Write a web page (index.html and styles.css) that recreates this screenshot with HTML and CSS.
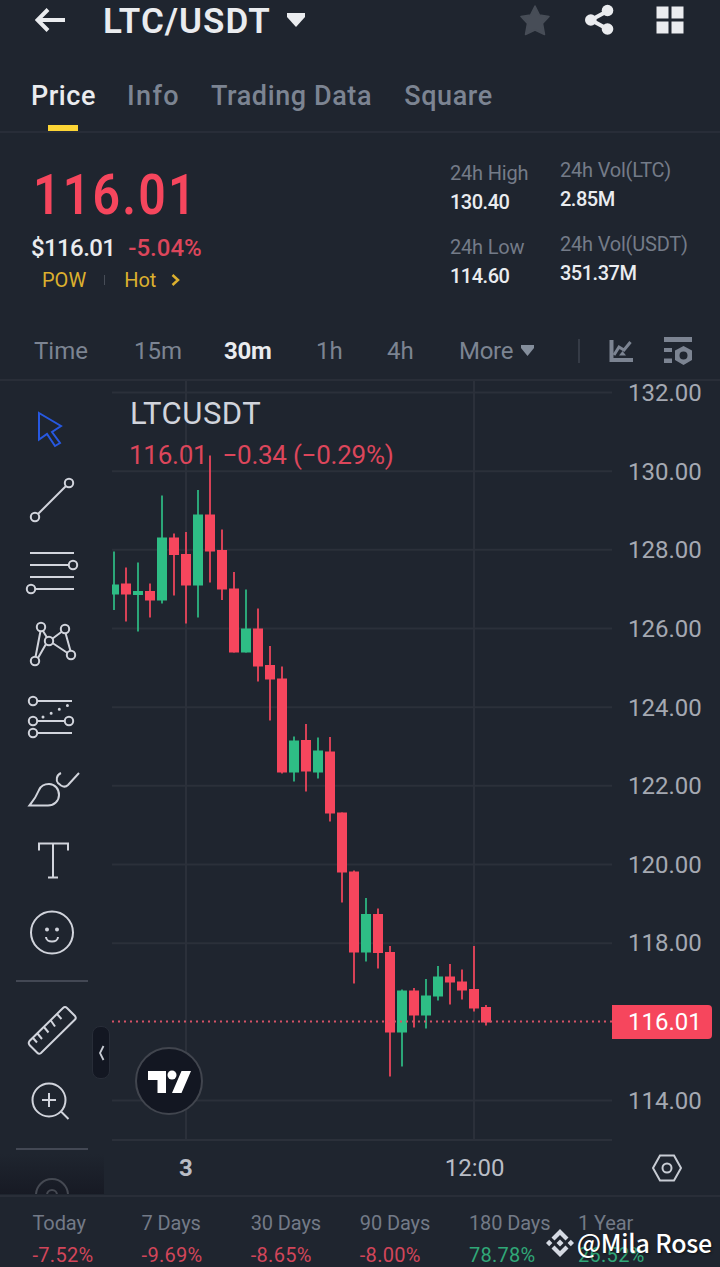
FILE: index.html
```html
<!DOCTYPE html>
<html lang="en">
<head>
    <meta charset="UTF-8">
    <meta name="viewport" content="width=device-width, initial-scale=1.0">
    <title>LTC/USDT</title>
    <link rel="stylesheet" href="styles.css">
</head>
<body>
    <header class="header">
        <svg class="back" width="30" height="24" viewBox="0 0 30 24"><path d="M30 12H3M13 1.500L2.500 12L13 22.500" fill="none" stroke="#eaecef" stroke-width="4"/></svg>
        <h1>LTC/USDT</h1>
        <svg width="18" height="15" viewBox="0 0 18 15"><path d="M0 0H18V4L9 14L0 4Z" fill="#eaecef"/></svg>
        <div class="actions">
            <svg width="30" height="31" viewBox="0 0 30 31"><path d="M15 1L19.500 10L29 11.500L22.500 18.500L24.500 29.500L15 25L5.500 29.500L7.500 18.500L1 11.500L10.500 10Z" fill="#474d57" stroke="#474d57" stroke-width="1.500" stroke-linejoin="round"/></svg>
            <svg width="30" height="32" viewBox="0 0 30 32"><path d="M22.500 7L6 16L22.500 25" fill="none" stroke="#eaecef" stroke-width="4"/><g fill="#eaecef"><circle cx="22.500" cy="6.500" r="5.800"/><circle cx="5.800" cy="16" r="5.800"/><circle cx="22.500" cy="25" r="5.800"/></g></svg>
            <svg width="28" height="28" viewBox="0 0 28 28"><path d="M.5.5h12v12H.5zM15.500.5h12v12h-12zM.5 15.500h12v12H.5zM15.500 15.500h12v12h-12z" fill="#eaecef"/></svg>
        </div>
    </header>

    <nav class="tabs">
        <a class="tab active">Price</a>
        <a class="tab info">Info</a>
        <a class="tab trading">Trading Data</a>
        <a class="tab square">Square</a>
    </nav>

    <section class="ticker">
        <div class="summary">
            <div class="last">116.01</div>
            <div class="fiat"><span class="usd">$116.01</span><span class="change">-5.04%</span></div>
            <div class="tags">
                <span>POW</span><i></i><span class="hot">Hot</span>
                <svg width="9" height="12" viewBox="0 0 9 12"><path d="M1.500 1L7 6L1.500 11" fill="none" stroke="#dcb02e" stroke-width="2.500"/></svg>
            </div>
        </div>
        <dl class="day high">
            <dt>24h High</dt><dd>130.40</dd>
            <dt>24h Low</dt><dd>114.60</dd>
        </dl>
        <dl class="day volume">
            <dt>24h Vol(LTC)</dt><dd>2.85M</dd>
            <dt>24h Vol(USDT)</dt><dd>351.37M</dd>
        </dl>
    </section>

    <nav class="intervals">
        <span class="time">Time</span>
        <span class="m15">15m</span>
        <span class="m30 active">30m</span>
        <span class="h1">1h</span>
        <span class="h4">4h</span>
        <span class="more">More <svg width="13" height="11" viewBox="0 0 13 11"><path d="M0 0H13V3L6.500 11L0 3Z" fill="#848e9c"/></svg></span>
        <i></i>
        <svg class="line-icon" width="24" height="24" viewBox="0 0 24 24"><g fill="none" stroke="#7c8492"><path d="M2.500 1V21H24" stroke-width="4"/><path d="M5 16L10 8L15 11L21.500 3" stroke-width="3"/></g><path d="M10 16.500L13.500 12L17 16.500Z" fill="#7c8492"/></svg>
        <svg width="28" height="28" viewBox="0 0 28 28"><g fill="#7c8492"><path d="M0 0H28V5H0zM0 11H8V15H0zM0 21.500H8V26H0z"/><path fill-rule="evenodd" d="M19.500 9L28 13.500V23L19.500 28L11 23V13.500ZM19.500 14.500A4 4 0 1 0 19.500 22.500A4 4 0 1 0 19.500 14.500Z"/></g></svg>
    </nav>

    <main class="chart">
        <aside class="toolbar">
            <svg class="tool cursor" viewBox="0 0 56 56"><path d="M15 12L37 25L28 31L36 42L31 45L23 33L15 38.500Z"/></svg>
            <svg class="tool" viewBox="0 0 56 56"><path d="M14 41L42 13"/><circle cx="45" cy="10" r="4.200"/><circle cx="11" cy="44" r="4.200"/></svg>
            <svg class="tool" viewBox="0 0 56 56"><path d="M6 8H50M6 20H45M6 32H50M11 44H50"/><circle cx="49" cy="20" r="4.200"/><circle cx="7" cy="44" r="4.200"/></svg>
            <svg class="tool" viewBox="0 0 56 56"><path d="M16.500 14L11.500 40M19 14L23 20.500M22 27L14 41M28 22L38 14.500M41.500 16L46.500 34M28.500 26L43.500 36"/><circle cx="17" cy="10" r="4.200"/><circle cx="41" cy="12" r="4.200"/><circle cx="25" cy="24" r="4.200"/><circle cx="47" cy="38" r="4.200"/><circle cx="11" cy="44" r="4.200"/></svg>
            <svg class="tool" viewBox="0 0 56 56"><path d="M13 12H48M13 32H41M13 44H48"/><circle cx="9" cy="12" r="4.200"/><circle cx="9" cy="32" r="4.200"/><circle cx="45" cy="32" r="4.200"/><circle cx="9" cy="44" r="4.200"/><path class="dots" d="M19 28L44.500 16"/></svg>
            <svg class="tool" viewBox="0 0 56 56"><path d="M5.500 44.500C10 39 13 34 15 29C17 24.500 20 23 25 23C31 23 35 28 35 34C35 40 30 44.500 24 44.500ZM37 12C32 14 32 20 34 22L37 24.500Q41 27 44 24L55 12"/></svg>
            <svg class="tool" viewBox="0 0 56 56"><path d="M15 17.500V10.500H44V17.500M29 10.500V44.500M24 44.500H34"/></svg>
            <svg class="tool" viewBox="0 0 56 56"><circle cx="28" cy="27.500" r="21"/><path d="M22 32C22 38 34 38 34 32"/><circle class="solid" cx="23" cy="24.500" r="2"/><circle class="solid" cx="33" cy="24.500" r="2"/></svg>
            <hr>
            <svg class="tool" viewBox="0 0 56 56"><path d="M39 7Q41 5 43 7L51 15Q52.500 17 51 18.500L17 52Q15 53.500 13.500 52L5.500 44Q4 42 5.500 40ZM33 13L37.500 18M26.500 19L31 25.500M20 26L24.500 31.500M13.500 32.500L18 38M9 37L13 41.500"/></svg>
            <svg class="tool" viewBox="0 0 56 56"><circle cx="25" cy="27" r="16.500"/><path d="M25 20V34M18 27H32M37 38.500L44.500 46"/></svg>
            <hr>
            <div class="fade">
                <svg width="56" height="40" viewBox="0 0 56 40"><g fill="none" stroke="#454952" stroke-width="2"><circle cx="28" cy="41" r="16"/><circle cx="28" cy="41" r="5"/></g></svg>
            </div>
        </aside>

        <div class="plot">
            <svg id="candles" width="500" height="814" viewBox="112 381 500 814"></svg>
            <div class="legend">
                <div class="symbol">LTCUSDT</div>
                <div class="quote"><span>116.01</span><span>−0.34 (−0.29%)</span></div>
            </div>
            <svg class="tv" width="68" height="68" viewBox="0 0 68 68"><circle cx="34" cy="34" r="33" fill="#131722" stroke="#41454e" stroke-width="2"/><path d="M13 24H31V46H22.500V33H13ZM46.500 24H56L46.500 46H37Z" fill="#fff"/><circle cx="37" cy="28" r="4.500" fill="#fff"/></svg>
            <div class="times"><b>3</b><span>12:00</span></div>
            <button class="collapse"><svg width="7" height="16" viewBox="0 0 7 16"><path d="M5.500 1L2 8L5.500 15" fill="none" stroke="#c8ccd4" stroke-width="1.800"/></svg></button>
        </div>

        <div class="axis">
            <span>132.00</span>
            <span>130.00</span>
            <span>128.00</span>
            <span>126.00</span>
            <span>124.00</span>
            <span>122.00</span>
            <span>120.00</span>
            <span>118.00</span>
            <span><mark>116.01</mark></span>
            <span>114.00</span>
            <svg width="30" height="28" viewBox="0 0 30 28"><g fill="none" stroke="#c8ccd4" stroke-width="2"><path d="M8 1.500H22L29 14L22 26.500H8L1 14Z"/><circle cx="15" cy="14" r="4.500"/></g></svg>
        </div>
    </main>

    <footer class="periods">
        <div><span>Today</span><b>-7.52%</b></div>
        <div><span>7 Days</span><b>-9.69%</b></div>
        <div><span>30 Days</span><b>-8.65%</b></div>
        <div><span>90 Days</span><b>-8.00%</b></div>
        <div><span>180 Days</span><b class="up">78.78%</b></div>
        <div><span>1 Year</span><b class="up">26.52%</b></div>
        <div class="author">
            <svg width="28" height="28" viewBox="0 0 28 28"><path d="M14 0L22.500 8.500L19.500 11.500L14 6L8.500 11.500L5.500 8.500ZM14 28L5.500 19.500L8.500 16.500L14 22L19.500 16.500L22.500 19.500ZM14 10.500L17.500 14L14 17.500L10.500 14ZM3.200 10.800L6.400 14L3.200 17.200L0 14ZM24.800 10.800L28 14L24.800 17.200L21.600 14Z" fill="#d5dae3"/></svg>
            <span>@Mila Rose</span>
        </div>
    </footer>

    <script>
        // [direction, high, body top, body bottom, low]
        const candles = [
            ['up', 551.5, 584.5, 594.5, 610],
            ['down', 567.5, 583.5, 594.5, 621.5],
            ['up', 562.5, 591, 595, 631.5],
            ['down', 583.5, 591, 600.5, 617.5],
            ['up', 495.5, 537.5, 600.5, 603.5],
            ['down', 533.5, 537.5, 555, 595.5],
            ['down', 532, 554, 585.5, 623.5],
            ['up', 490, 514.5, 585.5, 617.5],
            ['down', 455.5, 514.5, 551.5, 582.5],
            ['down', 529.5, 550, 589.5, 600],
            ['down', 572, 588.5, 652.5, 652.5],
            ['up', 589.5, 628.5, 652.5, 652.5],
            ['down', 608.5, 628.5, 666.5, 681.5],
            ['down', 646, 665, 679.5, 720.5],
            ['down', 666.5, 678.5, 772.5, 773.5],
            ['up', 736.5, 740.5, 772.5, 781.5],
            ['down', 724, 740, 771.5, 791.5],
            ['up', 737.5, 750.5, 772.5, 778.5],
            ['down', 737, 751.5, 813.5, 821.5],
            ['down', 812.5, 812.5, 872.5, 902.5],
            ['down', 870.5, 871.5, 952.5, 983.5],
            ['up', 898, 914, 952.5, 961.5],
            ['down', 908.5, 914, 953, 968.5],
            ['down', 946, 952, 1032.5, 1076.5],
            ['up', 989.5, 990.5, 1032.5, 1066.5],
            ['down', 988, 990.5, 1015.5, 1027.5],
            ['up', 979, 995.5, 1015.5, 1028.5],
            ['up', 966, 976.5, 996.5, 1000.5],
            ['down', 964, 976.5, 982.5, 1004.5],
            ['down', 969.5, 981.5, 990.5, 999.5],
            ['down', 946, 989, 1008.5, 1011.5],
            ['down', 1005, 1007, 1022.5, 1025.5]
        ];

        let shapes = '';

        // Grid
        for (let i = 0; i < 10; i++) {
            const y = 392.5 + i * 78.67;
            if (i !== 8) {
                shapes += `<path class="grid" d="M112 ${y}H612"/>`;
            }
        }
        shapes += '<path class="grid" d="M186 381V1140M474 381V1140M112 1140H612"/>';

        // Candles
        candles.forEach(([dir, high, top, bottom, low], i) => {
            const x = 114 + i * 12;
            shapes += `<path class="wick ${dir}" d="M${x} ${high}V${low}"/>`;
            shapes += `<rect class="${dir}" x="${x - 5}" y="${top}" width="10" height="${bottom - top}"/>`;
        });

        // Last price
        shapes += '<path class="last-line" d="M112 1021.5H612"/>';
        document.getElementById('candles').innerHTML = shapes;
    </script>
</body>
</html>
```
FILE: styles.css
```css
* {
    box-sizing: border-box;
}

body {
    margin: 0;
    width: 720px;
    height: 1267px;
    overflow: hidden;
    background-color: #1f252f;
    color: #eaecef;
    font-family: Roboto, 'Liberation Sans', sans-serif;
}

svg {
    display: block;
    flex: none;
}

.header {
    display: flex;
    align-items: center;
    height: 40px;
    padding: 0 36px 0 35px;
}

h1 {
    margin: 3px 17px 0 38px;
    width: 167px;
    font-size: 35px;
    line-height: 40px;
    font-weight: 600;
    letter-spacing: 1px;
    white-space: nowrap;
}

.actions {
    display: flex;
    align-items: center;
    gap: 35px;
    margin-left: auto;
}

.actions svg:last-child {
    margin-left: 6px;
}

/* Tabs */
.tabs {
    display: flex;
    height: 93px;
    border-bottom: 2px solid #282d38;
    padding: 36px 0 0 31px;
    font-size: 27px;
    line-height: 40px;
    font-weight: 500;
    color: #7c8492;
    white-space: nowrap;
}

.tab {
    display: flex;
    flex-direction: column;
    align-items: center;
    width: 65px;
    margin-right: 31px;
    letter-spacing: 0.6px;
}

.tab.active {
    color: #eaecef;
}

.tab.active::after {
    content: '';
    width: 30px;
    height: 7px;
    margin: 9px 2px 0 0;
    background-color: #fcd535;
}

.tab.info {
    width: 53px;
    letter-spacing: 1.4px;
}

.tab.trading {
    width: 161px;
}

.tab.square {
    width: 91px;
}

/* Ticker */
.ticker {
    display: flex;
    height: 187px;
    padding-left: 31px;
    white-space: nowrap;
}

.summary {
    width: 419px;
}

/* Condensed, widely spaced digits */
.last {
    margin: 32px 0 0 2px;
    color: #f6465d;
    font-size: 56px;
    line-height: 60px;
    font-weight: 600;
    letter-spacing: 2.6px;
    transform: scaleX(0.86);
    transform-origin: left;
}

.fiat {
    display: flex;
    gap: 13px;
    margin-top: 8px;
    font-size: 24px;
    line-height: 30px;
    font-weight: 500;
}

.usd {
    letter-spacing: -0.6px;
}

.change {
    color: #dc465b;
}

.tags {
    display: flex;
    align-items: center;
    margin-top: 4px;
    padding-left: 11px;
    color: #dcb02e;
    font-size: 20px;
    line-height: 26px;
}

.tags i {
    width: 1px;
    height: 10px;
    margin: 0 19px 0 18px;
    background-color: #474d57;
}

.hot {
    margin-right: 15px;
}

.day {
    width: 110px;
    margin: 26px 0 0;
    font-size: 20px;
    line-height: 28px;
}

.day.volume {
    margin-top: 23px;
}

.day dt {
    color: #747b88;
    letter-spacing: -0.2px;
}

.day dd {
    margin: 1px 0 17px;
    font-weight: 500;
    letter-spacing: -0.5px;
}

/* Intervals */
.intervals {
    display: flex;
    align-items: center;
    height: 59px;
    padding: 2px 0 0 34px;
    color: #7c8492;
    font-size: 24px;
    white-space: nowrap;
}

.intervals .active {
    color: #eaecef;
    font-weight: 700;
    letter-spacing: -0.3px;
}

.intervals .time {
    width: 100px;
}

.intervals .m15 {
    width: 90px;
}

.intervals .m30 {
    width: 92px;
}

.intervals .h1 {
    width: 71px;
}

.intervals .h4 {
    width: 72px;
}

.intervals .more {
    display: flex;
    align-items: center;
    gap: 8px;
    width: 119px;
    letter-spacing: -0.3px;
}

.intervals i {
    width: 2px;
    height: 24px;
    margin-right: 29px;
    background-color: #353b46;
}

.line-icon {
    margin-right: 31px;
}

/* Chart */
.chart {
    display: flex;
    height: 818px;
    border-top: 2px solid #292e38;
    border-bottom: 2px solid #292e38;
    overflow: hidden;
}

.toolbar {
    display: flex;
    flex-direction: column;
    width: 112px;
    padding-top: 11.5px;
}

.tool {
    width: 56px;
    height: 56px;
    margin: 8px 0 8px 24px;
    fill: none;
    stroke: #d1d4dc;
    stroke-width: 2;
}

.cursor {
    stroke: #2962ff;
    opacity: 0.85;
}

.solid {
    fill: #d1d4dc;
    stroke: none;
}

.dots {
    stroke-width: 3;
    stroke-linecap: round;
    stroke-dasharray: 0 9;
}

.toolbar hr {
    flex: none;
    width: 72px;
    height: 2px;
    margin: 11px 0 11px 16px;
    border: none;
    background-color: #434854;
}

.fade {
    flex: none;
    width: 104px;
    height: 40px;
    margin-top: -7px;
    padding-left: 24px;
    background: linear-gradient(#1f252f, #171a24);
}

.plot {
    position: relative;
    width: 500px;
}

.grid {
    fill: none;
    stroke: #2b303a;
    stroke-width: 2;
}

.up {
    fill: #2ebd85;
    stroke: #2ebd85;
    stroke-width: 0;
}

.down {
    fill: #f6465d;
    stroke: #f6465d;
    stroke-width: 0;
}

.wick {
    stroke-width: 2;
    opacity: 0.85;
}

.last-line {
    stroke: #d55266;
    stroke-width: 2;
    stroke-dasharray: 2 4;
}

.legend {
    position: absolute;
    left: 17px;
    top: 12px;
    white-space: nowrap;
}

.symbol {
    padding-left: 1px;
    color: #d1d4dc;
    font-size: 31px;
    line-height: 42px;
    letter-spacing: 0.5px;
}

.quote {
    display: flex;
    gap: 15px;
    color: #dc465b;
    font-size: 26px;
    line-height: 41px;
    letter-spacing: -0.25px;
}

.tv {
    position: absolute;
    left: 23px;
    top: 666px;
}

/* Time labels lie over the bottom of the plot */
.times {
    position: absolute;
    left: 67px;
    top: 770px;
    display: flex;
    gap: 252px;
    color: #b9bdc6;
    font-size: 24px;
    line-height: 34px;
}

.collapse {
    position: absolute;
    left: -20px;
    top: 645px;
    display: flex;
    align-items: center;
    justify-content: center;
    width: 18px;
    height: 53px;
    padding: 0;
    border: 1px solid #282d38;
    border-radius: 8px;
    background-color: #131722;
}

.axis {
    display: flex;
    flex-direction: column;
    align-items: flex-start;
    width: 108px;
    margin-top: -27px;
    color: #a5a9b2;
    font-size: 24px;
}

.axis span {
    display: flex;
    flex: none;
    align-items: center;
    height: 78.6px;
    padding-left: 16px;
}

.axis mark {
    width: 100px;
    margin-left: -16px;
    padding-left: 16px;
    border-radius: 0 4px 4px 0;
    background-color: #f6465d;
    color: #fff;
    line-height: 34px;
}

.axis svg {
    margin: 14px 0 0 40px;
}

/* Periods */
.periods {
    position: relative;
    display: grid;
    grid-template-columns: repeat(6, 109.1px);
    padding: 13px 0 0 32.5px;
    white-space: nowrap;
}

.periods span,
.periods b {
    display: block;
    color: #737a87;
    font-size: 20px;
    line-height: 26px;
}

.periods b {
    margin-top: 6px;
    color: #d2455a;
    font-weight: 400;
    letter-spacing: 0.3px;
}

.periods span {
    letter-spacing: -0.1px;
}

.periods b.up {
    color: #30a878;
}

.author {
    position: absolute;
    right: 8px;
    top: 29px;
    display: flex;
    align-items: center;
    gap: 3px;
}

.periods .author span {
    margin-top: -2px;
    color: #fff;
    font-family: 'Noto Sans CJK SC', sans-serif;
    font-size: 25px;
    line-height: 36px;
    font-weight: 500;
    letter-spacing: -0.2px;
    text-shadow: 1px 1px 2px rgba(0, 0, 0, 0.5);
}
```
